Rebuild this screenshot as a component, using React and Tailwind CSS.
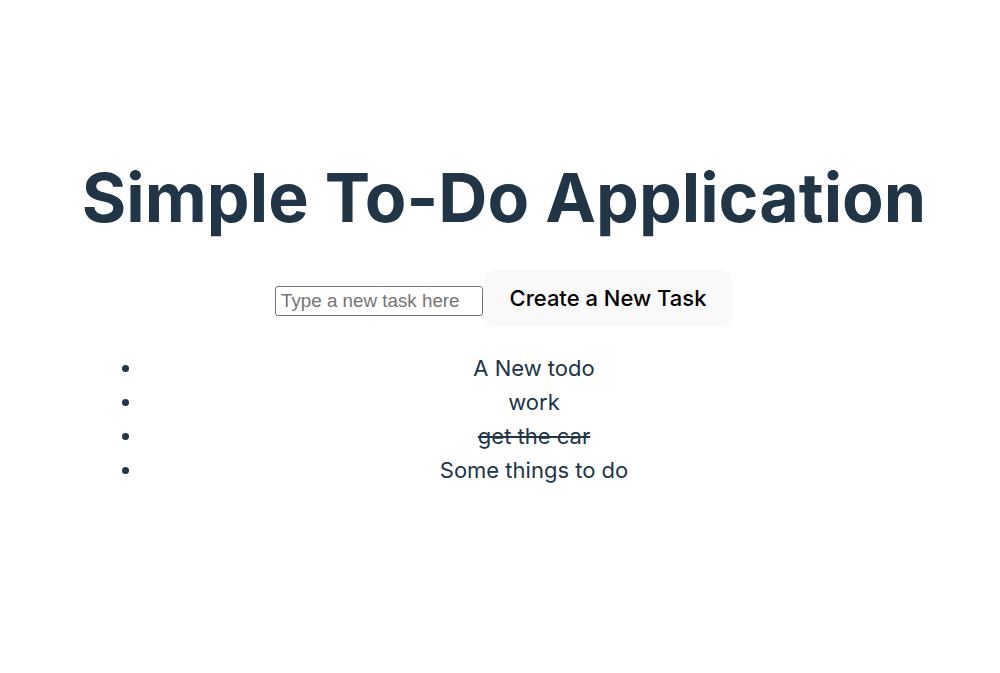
import React from "react";

export default function App() {
  const todos = [
    { text: "A New todo", done: false },
    { text: "work", done: false },
    { text: "get the car", done: true },
    { text: "Some things to do", done: false },
  ];
  return (
    <div className="min-h-[673px] w-full bg-white text-[#213547] flex justify-center pl-[8px]" style={{ fontFamily: "Inter, 'Noto Sans', sans-serif" }}>
      <div className="w-[852px] flex flex-col items-center pt-[160px]">
        <h1 className="text-[68px] leading-[75px] font-bold text-center whitespace-nowrap">
          Simple To-Do Application
        </h1>
        <div className="flex items-start mt-[35px]">
          <input
            type="text"
            placeholder="Type a new task here"
            className="mt-[16px] w-[208px] h-[30px] border border-[#767676] rounded-[3px] px-[5px] text-[18.8px] text-black placeholder:text-[#757575] outline-none bg-white"
            style={{ fontFamily: "'Liberation Sans', Arial, sans-serif" }}
          />
          <button className="h-[57px] w-[250px] rounded-[12px] bg-[#f9f9f9] text-[22px] font-medium text-black leading-[27px]">
            Create a New Task
          </button>
        </div>
        <ul className="w-full list-disc pl-[65px] pr-[5px] mt-[24px] text-[22px] leading-[34px]">
          {todos.map((t) => (
            <li key={t.text} className={"text-center" + (t.done ? " line-through" : "")}>
              {t.text}
            </li>
          ))}
        </ul>
      </div>
    </div>
  );
}
